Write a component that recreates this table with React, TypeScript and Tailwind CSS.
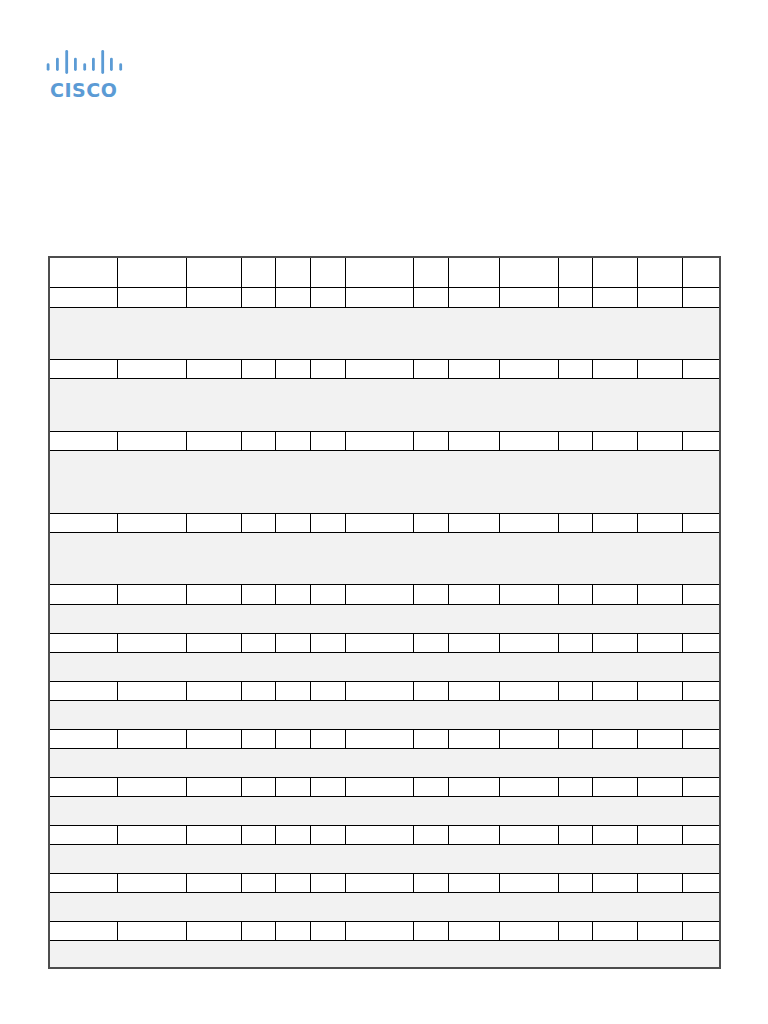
import React from "react";

const colsClass =
  "grid grid-cols-[67px_69px_55px_34px_35px_35px_68px_35px_51px_59px_34px_45px_45px_1fr]";

const NCOLS = 14;

function WhiteRow({ h, top = true }: { h: string; top?: boolean }) {
  return (
    <div className={`${colsClass} ${h} ${top ? "border-t border-black" : ""} bg-white`}>
      {Array.from({ length: NCOLS }).map((_, i) => (
        <div key={i} className={i === 0 ? "" : "border-l border-black"} />
      ))}
    </div>
  );
}

function GrayRow({ h }: { h: string }) {
  return <div className={`${h} border-t border-black bg-[#f2f2f2]`} />;
}

function CiscoLogo() {
  const bars = [
    { x: 46.7, y1: 63.3, y2: 70.7 },
    { x: 56, y1: 57.7, y2: 71 },
    { x: 65.3, y1: 50, y2: 74 },
    { x: 74, y1: 57.7, y2: 71 },
    { x: 83.3, y1: 63.3, y2: 70.7 },
    { x: 92, y1: 57.7, y2: 71 },
    { x: 101.3, y1: 50, y2: 74 },
    { x: 110, y1: 57.7, y2: 71 },
    { x: 119.3, y1: 63.3, y2: 70.7 },
  ];
  return (
    <div className="flex flex-col items-start">
      <svg width="84" height="26" viewBox="44 49 84 26" className="block">
        {bars.map((b, i) => (
          <rect
            key={i}
            x={b.x}
            y={b.y1}
            width={2.8}
            height={b.y2 - b.y1}
            rx={1.4}
            fill="#5b9bd5"
          />
        ))}
      </svg>
      <span
        className="mt-[5px] ml-[6px] text-[19px] leading-[20px] font-bold tracking-[0.5px] text-[#5b9bd5]"
        style={{ fontFamily: '"DejaVu Sans", "Liberation Sans", sans-serif' }}
      >
        CISCO
      </span>
    </div>
  );
}

export default function App() {
  const rows: { type: "w" | "g"; h: string }[] = [
    { type: "g", h: "h-[52px]" },
    { type: "w", h: "h-[19px]" },
    { type: "g", h: "h-[53px]" },
    { type: "w", h: "h-[19px]" },
    { type: "g", h: "h-[63px]" },
    { type: "w", h: "h-[19px]" },
    { type: "g", h: "h-[52px]" },
    { type: "w", h: "h-[20px]" },
    { type: "g", h: "h-[29px]" },
    { type: "w", h: "h-[19px]" },
    { type: "g", h: "h-[29px]" },
    { type: "w", h: "h-[19px]" },
    { type: "g", h: "h-[29px]" },
    { type: "w", h: "h-[19px]" },
    { type: "g", h: "h-[29px]" },
    { type: "w", h: "h-[19px]" },
    { type: "g", h: "h-[29px]" },
    { type: "w", h: "h-[19px]" },
    { type: "g", h: "h-[29px]" },
    { type: "w", h: "h-[19px]" },
    { type: "g", h: "h-[29px]" },
    { type: "w", h: "h-[19px]" },
    { type: "g", h: "h-[27px]" },
  ];
  return (
    <div className="w-[768px] h-[1024px] bg-white overflow-hidden">
      <div className="h-[256px] pt-[49px] pl-[44px]">
        <CiscoLogo />
      </div>
      <div className="ml-[48px] w-[673px] border-2 border-[#4d4d4d] bg-white">
        <WhiteRow h="h-[29px]" top={false} />
        <WhiteRow h="h-[20px]" />
        {rows.map((r, i) =>
          r.type === "w" ? <WhiteRow key={i} h={r.h} /> : <GrayRow key={i} h={r.h} />
        )}
      </div>
    </div>
  );
}
